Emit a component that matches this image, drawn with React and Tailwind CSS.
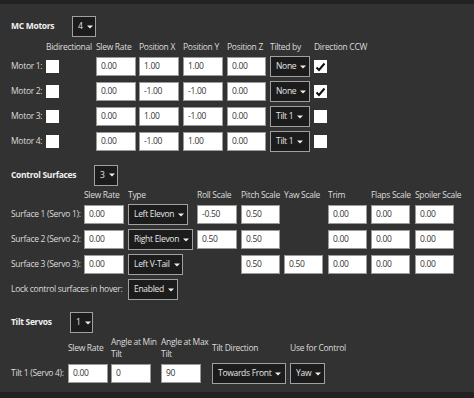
import React from "react";

const font = { fontFamily: '"Open Sans", "Noto Sans", sans-serif', letterSpacing: "-0.3px" };

function Caret() {
  return (
    <svg width="6" height="4" viewBox="0 0 6 4" className="ml-[4px] shrink-0">
      <path d="M0 0.5 L6 0.5 L3 3.5 Z" fill="#f0f0f0" />
    </svg>
  );
}

function Sel({ label, w }) {
  return (
    <div
      className={`flex h-[21px] items-center justify-between border border-[#a0a0a0] bg-[#1c1c1c] pl-[5px] pr-[6px] text-[8.5px] text-[#e6e6e6] ${w}`}
    >
      <span className="whitespace-nowrap">{label}</span>
      <Caret />
    </div>
  );
}

function Inp({ v, w = "w-[40px]" }) {
  return (
    <div
      className={`flex h-[19px] items-center border border-[#9a9a9a] bg-white pl-[4px] text-[8.5px] text-[#333] ${w}`}
    >
      {v}
    </div>
  );
}

function Box({ checked }) {
  return (
    <div className="flex h-[13px] w-[13px] items-center justify-center bg-white">
      {checked && (
        <svg width="11" height="10" viewBox="0 0 11 10">
          <path d="M1.5 5.5 L4 8 L9.5 1.5" stroke="#111" strokeWidth="2" fill="none" />
        </svg>
      )}
    </div>
  );
}

const motors = [
  ["Motor 1:", "1.00", "1.00", "None", true],
  ["Motor 2:", "-1.00", "-1.00", "None", true],
  ["Motor 3:", "1.00", "-1.00", "Tilt 1", false],
  ["Motor 4:", "-1.00", "1.00", "Tilt 1", false],
];

const mGrid = "grid grid-cols-[35px_50px_43px_44px_44px_43px_44px_auto] items-center";
const cGrid = "grid grid-cols-[73px_44px_69px_44px_43px_44px_43px_44px_auto] items-center";
const tGrid = "grid grid-cols-[57px_43px_50px_51px_78px_auto] items-center";

export default function App() {
  return (
    <div style={font} className="flex h-[398px] w-[474px] flex-col bg-[#323232] text-[8.5px] text-[#dcdcdc]">
      <div className="h-[4px] bg-[#222]" />
      <div className="flex-1 pl-[11px]">
        {/* MC Motors */}
        <div className="mt-[12px] flex h-[21px] items-center">
          <div className="w-[61px] font-bold text-[#f0f0f0]">MC Motors</div>
          <Sel label="4" w="w-[24px]" />
        </div>
        <div className={`${mGrid} mt-[4px] h-[13px] whitespace-nowrap`}>
          <div />
          <div>Bidirectional</div>
          <div>Slew Rate</div>
          <div>Position X</div>
          <div>Position Y</div>
          <div>Position Z</div>
          <div>Tilted by</div>
          <div>Direction CCW</div>
        </div>
        {motors.map(([l, x, y, t, c]) => (
          <div key={l} className={`${mGrid} h-[25px]`}>
            <div className="whitespace-nowrap">{l}</div>
            <Box />
            <Inp v="0.00" />
            <Inp v={x} />
            <Inp v={y} />
            <Inp v="0.00" w="w-[39px]" />
            <Sel label={t} w="w-[40px]" />
            <Box checked={c} />
          </div>
        ))}

        {/* Control Surfaces */}
        <div className="mt-[10px] flex h-[22px] items-center">
          <div className="w-[83px] font-bold text-[#f0f0f0]">Control Surfaces</div>
          <Sel label="3" w="w-[24px]" />
        </div>
        <div className={`${cGrid} mt-[2px] h-[14px] whitespace-nowrap`}>
          <div />
          <div>Slew Rate</div>
          <div>Type</div>
          <div>Roll Scale</div>
          <div>Pitch Scale</div>
          <div>Yaw Scale</div>
          <div>Trim</div>
          <div>Flaps Scale</div>
          <div>Spoiler Scale</div>
        </div>
        {[
          ["Surface 1 (Servo 1):", "Left Elevon", "w-[60px]", "-0.50"],
          ["Surface 2 (Servo 2):", "Right Elevon", "w-[65px]", "0.50"],
          ["Surface 3 (Servo 3):", "Left V-Tail", "w-[55px]", null],
        ].map(([l, t, tw, roll], i) => (
          <div key={l} className={`${cGrid} h-[25px]`}>
            <div className="whitespace-nowrap">{l}</div>
            <Inp v="0.00" />
            <Sel label={t} w={tw} />
            <div>{roll !== null && <Inp v={roll} />}</div>
            <Inp v="0.50" w="w-[39px]" />
            <div>{i === 2 && <Inp v="0.50" w="w-[39px]" />}</div>
            <Inp v="0.00" w="w-[39px]" />
            <Inp v="0.00" w="w-[39px]" />
            <Inp v="0.00" w="w-[39px]" />
          </div>
        ))}
        <div className="flex h-[25px] items-center">
          <div className="w-[117px] whitespace-nowrap">Lock control surfaces in hover:</div>
          <Sel label="Enabled" w="w-[50px]" />
        </div>

        {/* Tilt Servos */}
        <div className="mt-[10px] flex h-[21px] items-center">
          <div className="w-[59px] font-bold text-[#f0f0f0]">Tilt Servos</div>
          <Sel label="1" w="w-[23px]" />
        </div>
        <div className={`${tGrid} mt-[2px] h-[26px] leading-[12px]`}>
          <div />
          <div className="whitespace-nowrap">Slew Rate</div>
          <div className="whitespace-nowrap">Angle at Min<br />Tilt</div>
          <div className="whitespace-nowrap">Angle at Max<br />Tilt</div>
          <div className="whitespace-nowrap">Tilt Direction</div>
          <div className="whitespace-nowrap">Use for Control</div>
        </div>
        <div className={`${tGrid} h-[25px]`}>
          <div className="whitespace-nowrap">Tilt 1 (Servo 4):</div>
          <Inp v="0.00" />
          <Inp v="0" />
          <Inp v="90" />
          <Sel label="Towards Front" w="w-[74px]" />
          <Sel label="Yaw" w="w-[35px]" />
        </div>
      </div>
      <div className="h-[6px] bg-[#222]" />
    </div>
  );
}
